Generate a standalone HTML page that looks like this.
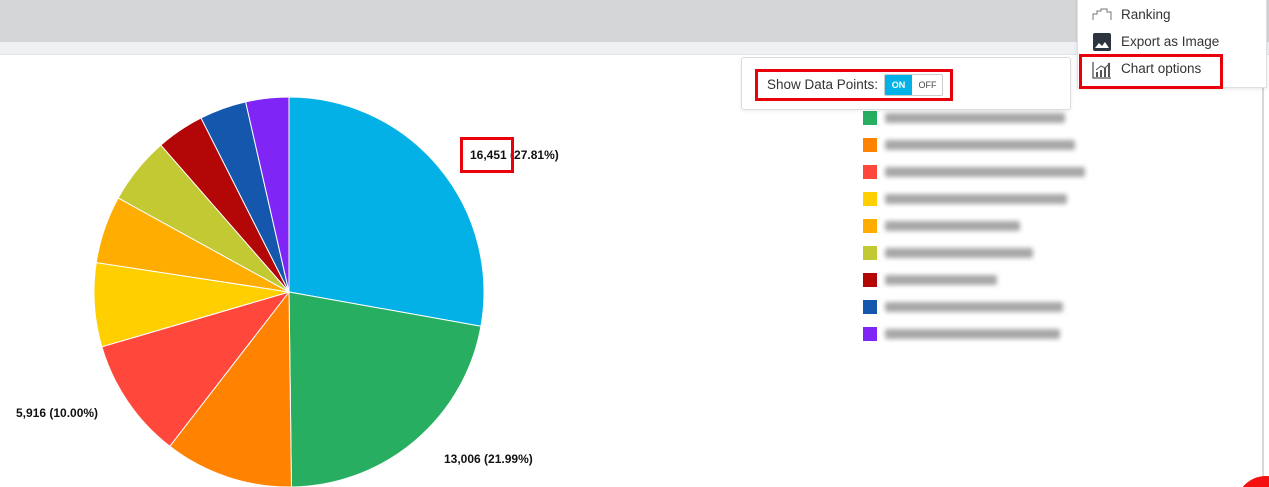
<!DOCTYPE html>
<html style="overflow:hidden;width:1269px;height:487px"><head><meta charset="utf-8"><style>
*{margin:0;padding:0;box-sizing:border-box}
body{width:1269px;height:487px;overflow:hidden;background:#fff;font-family:"Liberation Sans",sans-serif;position:relative}
.abs{position:absolute}
.lbl{position:absolute;font-size:12px;font-weight:bold;color:#111}
.lg{position:absolute;left:863px;width:14px;height:14px}
.lt{position:absolute;left:885px;height:10px;background:#8a8a8a;filter:blur(2.5px);opacity:.75;border-radius:2px}
.mi{position:absolute;left:1121px;font-size:13.5px;color:#333}
</style></head><body>
<div class="abs" style="left:0;top:0;width:1269px;height:42px;background:#d5d6d8"></div>
<div class="abs" style="left:0;top:42px;width:1269px;height:13px;background:#eef1f4;border-bottom:1px solid #e2e5e8"></div>
<div class="abs" style="left:1262px;top:55px;width:2px;height:432px;background:#d8d8d8"></div>

<svg class="abs" style="left:0;top:0" width="700" height="487">
<g stroke="#fff" stroke-width="1">
<path d="M289 292 L289 97 A195 195 0 0 1 480.96 326.26Z" fill="#03b1e7"/>
<path d="M289 292 L480.96 326.26 A195 195 0 0 1 291.45 486.98Z" fill="#27ae60"/>
<path d="M289 292 L291.45 486.98 A195 195 0 0 1 169.78 446.3Z" fill="#ff8300"/>
<path d="M289 292 L169.78 446.3 A195 195 0 0 1 101.86 346.78Z" fill="#ff473b"/>
<path d="M289 292 L101.86 346.78 A195 195 0 0 1 96.24 262.57Z" fill="#ffcf00"/>
<path d="M289 292 L96.24 262.57 A195 195 0 0 1 118.18 197.95Z" fill="#ffad00"/>
<path d="M289 292 L118.18 197.95 A195 195 0 0 1 160.79 145.07Z" fill="#c2c932"/>
<path d="M289 292 L160.79 145.07 A195 195 0 0 1 201.03 117.96Z" fill="#b30606"/>
<path d="M289 292 L201.03 117.96 A195 195 0 0 1 245.63 101.88Z" fill="#1457ad"/>
<path d="M289 292 L245.63 101.88 A195 195 0 0 1 289 97Z" fill="#7f25f6"/>
</g></svg>

<div class="lbl" style="left:470px;top:148px">16,451 (27.81%)</div>
<div class="abs" style="left:460px;top:137px;width:54px;height:36px;border:3px solid #e8000b"></div>
<div class="lbl" style="left:16px;top:406px">5,916 (10.00%)</div>
<div class="lbl" style="left:444px;top:452px">13,006 (21.99%)</div>

<div class="lg" style="top:111px;background:#27ae60"></div><div class="lt" style="top:113px;width:180px"></div>
<div class="lg" style="top:138px;background:#ff8300"></div><div class="lt" style="top:140px;width:190px"></div>
<div class="lg" style="top:165px;background:#ff473b"></div><div class="lt" style="top:167px;width:200px"></div>
<div class="lg" style="top:192px;background:#ffcf00"></div><div class="lt" style="top:194px;width:182px"></div>
<div class="lg" style="top:219px;background:#ffad00"></div><div class="lt" style="top:221px;width:135px"></div>
<div class="lg" style="top:246px;background:#c2c932"></div><div class="lt" style="top:248px;width:148px"></div>
<div class="lg" style="top:273px;background:#b30606"></div><div class="lt" style="top:275px;width:112px"></div>
<div class="lg" style="top:300px;background:#1457ad"></div><div class="lt" style="top:302px;width:178px"></div>
<div class="lg" style="top:327px;background:#7f25f6"></div><div class="lt" style="top:329px;width:175px"></div>

<div class="abs" style="left:741px;top:57px;width:330px;height:53px;background:#fff;border:1px solid #dcdcdc;border-radius:3px;box-shadow:0 1px 3px rgba(0,0,0,.08)"></div>
<div class="abs" style="left:755px;top:69px;width:198px;height:32px;border:3px solid #e8000b"></div>
<div class="abs" style="left:767px;top:77px;font-size:13.5px;color:#333">Show Data Points:</div>
<div class="abs" style="left:884px;top:74px;width:59px;height:22px;border:1px solid #ccc;border-radius:2px;overflow:hidden;background:#fff">
<div class="abs" style="left:0;top:0;width:27px;height:20px;background:#03b1e7;color:#fff;font-size:9px;font-weight:bold;text-align:center;line-height:20px">ON</div>
<div class="abs" style="left:27px;top:0;width:31px;height:20px;color:#444;font-size:9px;text-align:center;line-height:20px">OFF</div>
</div>

<div class="abs" style="left:1077px;top:-2px;width:190px;height:90px;background:#fff;border:1px solid #e0e0e0;box-shadow:0 1px 4px rgba(0,0,0,.1)"></div>
<svg class="abs" style="left:1092px;top:8px" width="22" height="14"><path d="M1 12V6h4V3h4V1h6v3h4v8" fill="none" stroke="#777" stroke-width="1"/></svg>
<div class="mi" style="top:7px">Ranking</div>
<svg class="abs" style="left:1093px;top:33px" width="18" height="18"><rect x="0" y="0" width="18" height="18" rx="2" fill="#2c3440"/><path d="M2 15l4-5 3 3 3-4 4 6z" fill="#fff"/></svg>
<div class="mi" style="top:34px">Export as Image</div>
<div class="abs" style="left:1079px;top:54px;width:144px;height:35px;border:3px solid #e8000b"></div>
<svg class="abs" style="left:1092px;top:61px" width="20" height="18"><path d="M1 1v16h18" fill="none" stroke="#555" stroke-width="1.3"/><path d="M5 16v-5M9 16v-7M13 16v-9M17 16V2" stroke="#555" stroke-width="2"/><path d="M4 9l5-4 4 2 5-5" fill="none" stroke="#555" stroke-width="1"/></svg>
<div class="mi" style="top:61px">Chart options</div>

<div class="abs" style="left:1236px;top:476px;width:60px;height:11px;overflow:hidden"><div style="width:60px;height:60px;border-radius:50%;background:#f50f0f"></div></div>
</body></html>
